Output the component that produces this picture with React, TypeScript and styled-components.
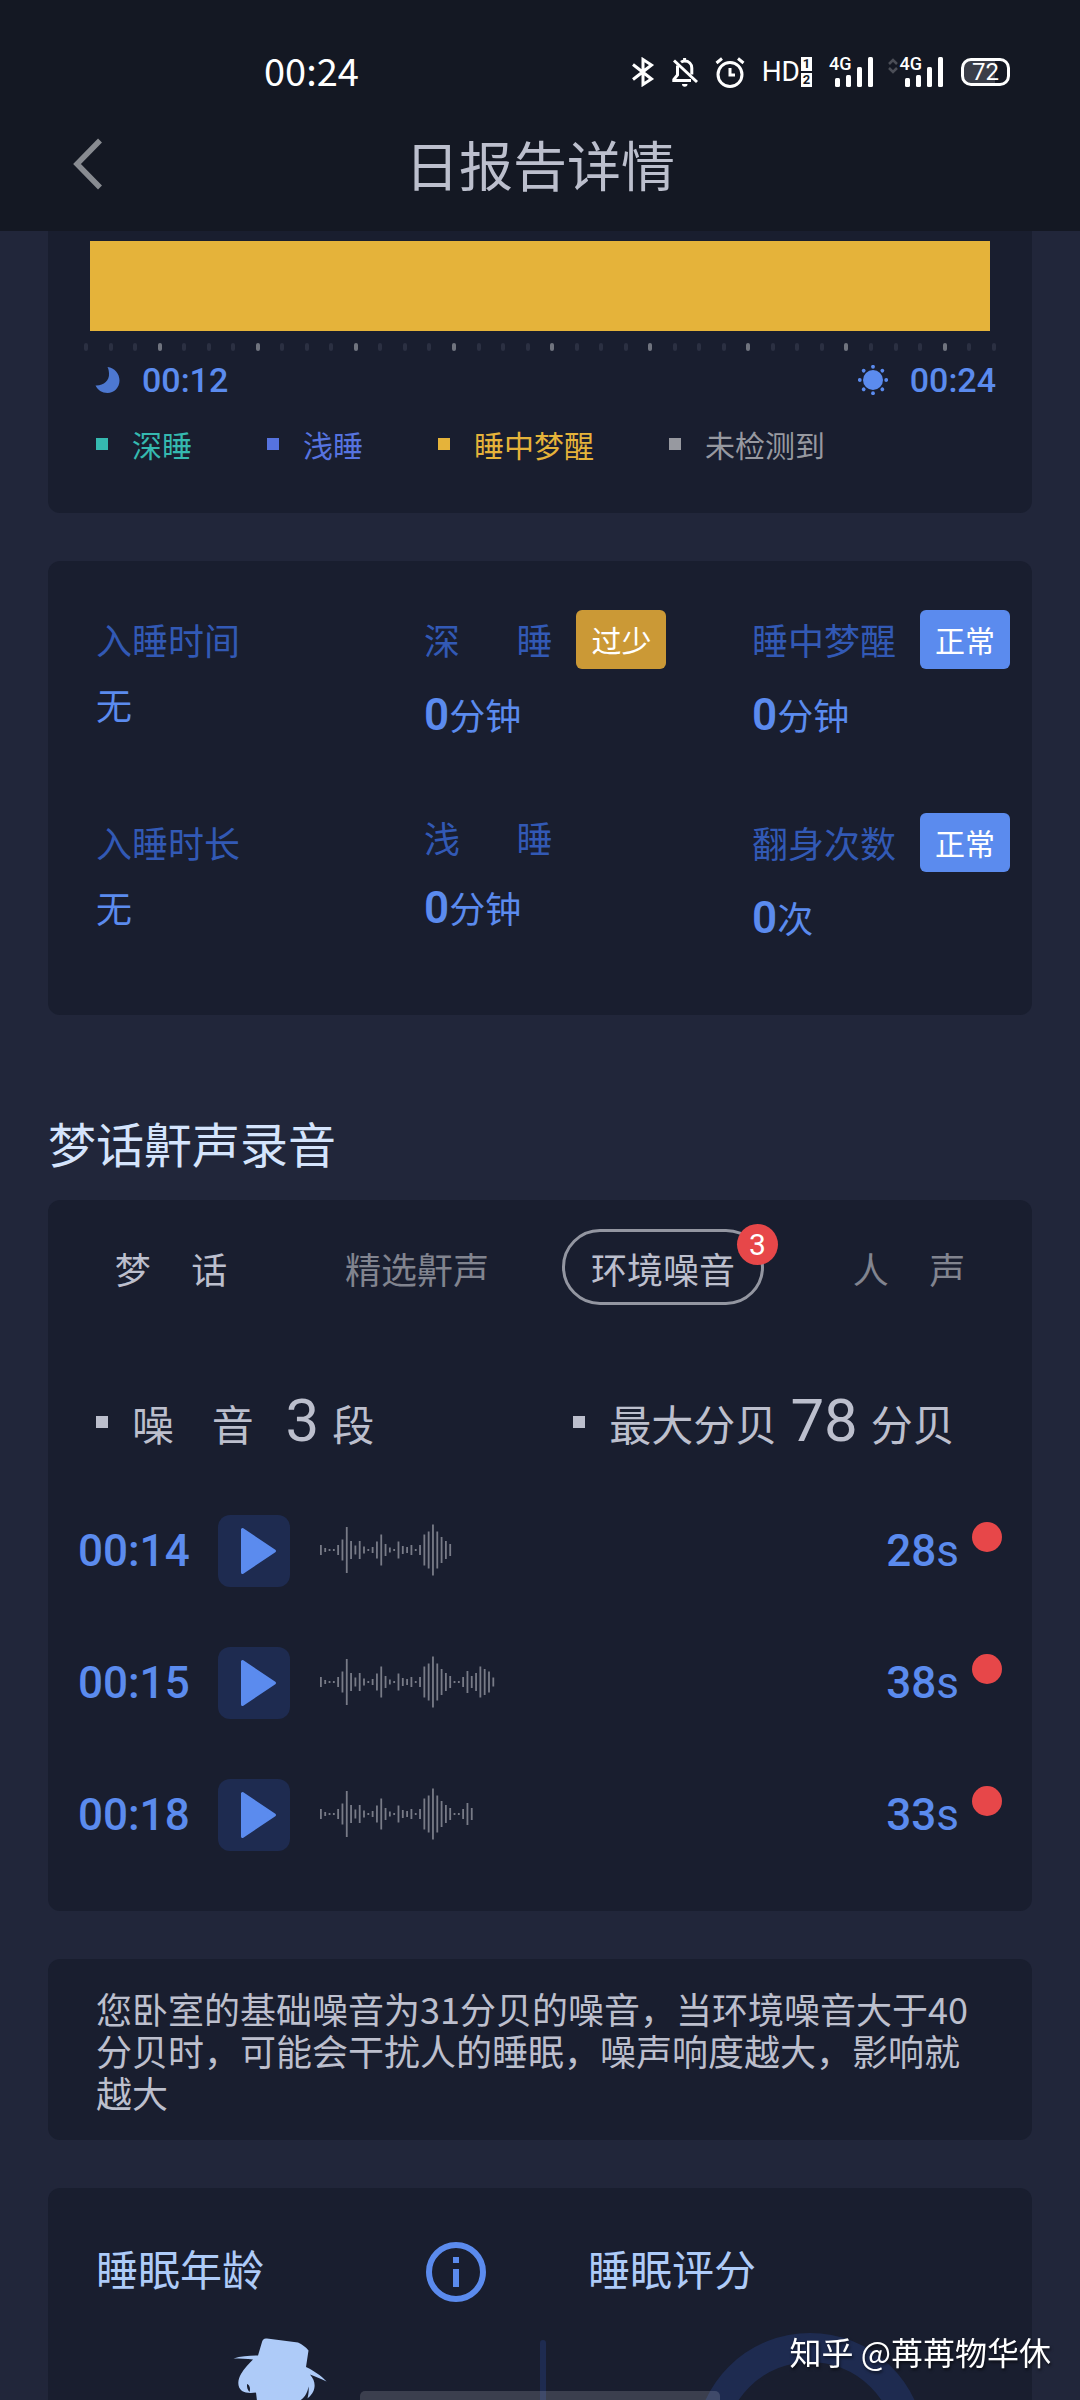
import React from "react";
import styled, { createGlobalStyle } from "styled-components";

const color = {
  header: "#141823",
  page: "#21263a",
  card: "#191e2f",
  blue: "#5b8bee",
  deepBlue: "#3259b5",
  navy: "#1e2b50",
  gold: "#e5b33a",
  amber: "#cb9936",
  teal: "#35b9b0",
  indigo: "#5673df",
  grey: "#9799a0",
  muted: "#81848f",
  soft: "#bcbfcd",
  pale: "#aecbf8",
  title: "#d5e4fc",
  red: "#e74749",
};

const cjk = `"Noto Sans CJK SC", "Noto Sans", sans-serif`;
const digits = `Roboto, "Noto Sans CJK SC", sans-serif`;

const GlobalStyle = createGlobalStyle`
  * { box-sizing: border-box; }
  body {
    margin: 0;
    background: ${color.page};
    font-family: ${cjk};
  }
  button {
    margin: 0;
    padding: 0;
    border: 0;
    background: none;
    color: inherit;
    font: inherit;
    cursor: pointer;
  }
  h1, h2, h3, p, ul, dl, dd { margin: 0; padding: 0; font-weight: 400; }
  ul { list-style: none; }
  svg { display: block; flex: none; }
`;

const Page = styled.div`
  display: flex;
  flex-direction: column;
  height: 100vh;
  overflow: hidden;
  white-space: nowrap;
`;

/* ---------- header ---------- */

const Header = styled.header`
  flex: none;
  background: ${color.header};
`;

const StatusBar = styled.div`
  display: flex;
  align-items: center;
  justify-content: space-between;
  height: 96px;
  padding: 48px 70px 0 264px;
  color: #fff;
`;

const Clock = styled.time`
  padding-bottom: 4px;
  font-size: 38px;
  line-height: 44px;
`;

const StatusIcons = styled.div`
  display: flex;
  align-items: center;
  gap: 17px;
`;

const HdMark = styled.span`
  display: flex;
  align-items: center;
  gap: 1px;
  font: 400 28px/30px ${digits};
`;

const SimStack = styled.span`
  display: grid;
  gap: 2px;
`;

const Sim = styled.span`
  width: 11px;
  background: #fff;
  color: ${color.header};
  font: 700 13px/14px ${digits};
  text-align: center;
`;

const Signals = styled.span`
  display: flex;
  gap: 14px;
`;

const FourG = styled.span`
  font: 500 18px/22px ${digits};
`;

const Signal = styled.span`
  display: flex;
  align-items: flex-start;
  height: 30px;
`;

const Battery = styled.span`
  display: grid;
  place-items: center;
  width: 49px;
  height: 28px;
  border: 3px solid #fff;
  border-radius: 10px;
  background: linear-gradient(90deg, #3b3e48 72%, transparent 72%);
  font: 400 24px/22px ${digits};
`;

const NavBar = styled.nav`
  display: grid;
  grid-template-columns: 1fr auto 1fr;
  align-items: center;
  height: 135px;
  padding: 0 68px;
`;

const BackButton = styled.button`
  justify-self: start;
  padding: 4px;
`;

const PageTitle = styled.h1`
  color: ${color.soft};
  font-size: 54px;
  line-height: 80px;
`;

/* ---------- shared blocks ---------- */

const Content = styled.main`
  display: flex;
  flex: 1;
  flex-direction: column;
  min-height: 0;
  padding: 0 48px;
  overflow: hidden;
`;

const Card = styled.section`
  flex: none;
  border-radius: 12px;
  background: ${color.card};
`;

const Marker = styled.i<{ $tint: string }>`
  flex: none;
  width: 12px;
  height: 12px;
  background: ${(p) => p.$tint};
`;

/* ---------- sleep timeline ---------- */

const TimelineCard = styled(Card)`
  padding: 10px 36px 39px;
  border-radius: 0 0 12px 12px;
`;

const AwakeBar = styled.div`
  height: 90px;
  margin: 0 6px;
  background: ${color.gold};
`;

const Ticks = styled.div`
  display: flex;
  justify-content: space-between;
  margin-top: 12px;
`;

const Tick = styled.i<{ $major: boolean }>`
  width: 4px;
  height: 8px;
  border-radius: 2px;
  background: ${(p) => (p.$major ? "#70747f" : "#2b3042")};
`;

const Range = styled.div`
  display: flex;
  justify-content: space-between;
  margin-top: 9px;
  padding: 0 0 0 11px;
`;

const RangeEnd = styled.span`
  display: flex;
  align-items: center;
  gap: 22px;
  color: ${color.blue};
  font: 500 34px/40px ${digits};
`;

const Legend = styled.ul`
  display: flex;
  gap: 75px;
  margin-top: 14px;
  padding: 0 12px;
`;

const LegendItem = styled.li<{ $tint: string }>`
  display: flex;
  align-items: center;
  gap: 24px;
  color: ${(p) => p.$tint};
  font-size: 30px;
  line-height: 60px;
`;

/* ---------- metrics ---------- */

const Metrics = styled(Card).attrs({ as: "dl" })`
  display: grid;
  grid-template-columns: repeat(3, 1fr);
  margin-top: 48px;
  padding-top: 48px;
`;

const Metric = styled.div`
  height: 203px;
  padding-left: 48px;
`;

const MetricLabel = styled.dt<{ $compact?: boolean }>`
  display: flex;
  align-items: center;
  gap: 24px;
  height: ${(p) => (p.$compact ? 50 : 60)}px;
  color: ${color.deepBlue};
  font-size: 36px;
`;

const Tag = styled.span<{ $tint: string }>`
  width: 90px;
  height: 59px;
  border-radius: 6px;
  background: ${(p) => p.$tint};
  color: #fff;
  font-size: 30px;
  line-height: 58px;
  text-align: center;
`;

const MetricValue = styled.dd<{ $numeric: boolean }>`
  display: flex;
  align-items: baseline;
  margin-top: ${(p) => (p.$numeric ? 21 : 11)}px;
  color: ${color.blue};
  font-size: 36px;
  line-height: 48px;
`;

const MetricNumber = styled.b`
  font: 600 44px/48px ${digits};
`;

/* ---------- recordings ---------- */

const SectionTitle = styled.h2`
  margin: 92px 0 23px;
  color: ${color.title};
  font-size: 48px;
  line-height: 70px;
`;

const RecordingCard = styled(Card)`
  padding-bottom: 60px;
`;

const Tabs = styled.div`
  display: grid;
  grid-template-columns: repeat(4, 1fr);
  justify-items: center;
  padding-top: 29px;
`;

const Tab = styled.button<{ $tint: string; $active?: boolean }>`
  position: relative;
  height: 76px;
  padding: 2px 26px 0;
  border: 3px solid ${(p) => (p.$active ? "#9396a1" : "transparent")};
  border-radius: 38px;
  color: ${(p) => p.$tint};
  font-size: 36px;
  line-height: 68px;
`;

const CountBadge = styled.span`
  position: absolute;
  top: -8px;
  right: -17px;
  width: 41px;
  height: 41px;
  border-radius: 50%;
  background: ${color.red};
  color: #fff;
  font: 400 30px/42px ${digits};
  text-align: center;
`;

const Summary = styled.div`
  display: grid;
  grid-template-columns: 51% 49%;
  margin-top: 75px;
  padding-left: 48px;
`;

const SummaryItem = styled.p`
  display: flex;
  align-items: center;
  gap: 24px;
  height: 84px;
  color: ${color.soft};
  font-size: 42px;
  line-height: 84px;
`;

const SummaryNumber = styled.span`
  margin: 0 13px;
  font: 400 60px/84px ${digits};
`;

const Clips = styled.ul`
  display: grid;
  gap: 60px;
  margin-top: 51px;
  padding: 0 30px;
`;

const Clip = styled.li`
  display: flex;
  align-items: center;
  height: 72px;
  color: ${color.blue};
  font: 500 44px/72px ${digits};
`;

const PlayButton = styled.button`
  display: grid;
  place-items: center;
  width: 72px;
  height: 72px;
  margin: 0 30px 0 28px;
  padding-left: 10px;
  border-radius: 12px;
  background: ${color.navy};
`;

const Duration = styled.span`
  margin-left: auto;
`;

const Unit = styled.span`
  font-weight: 400;
`;

const UnreadDot = styled.i`
  align-self: flex-start;
  width: 30px;
  height: 30px;
  margin: 7px 0 0 13px;
  border-radius: 50%;
  background: ${color.red};
`;

const Note = styled(Card).attrs({ as: "p" })`
  margin-top: 48px;
  padding: 28px 48px 27px;
  color: ${color.soft};
  font-size: 36px;
  line-height: 42px;
  white-space: normal;
`;

/* ---------- scores ---------- */

const ScoreCard = styled(Card)`
  flex: 1 0 0;
  min-height: 0;
  margin-top: 48px;
  padding-top: 54px;
  border-radius: 12px 12px 0 0;
  overflow: hidden;
`;

const ScoreHeads = styled.div`
  display: grid;
  grid-template-columns: 1fr 1fr;
`;

const ScoreHead = styled.div`
  display: flex;
  align-items: center;
  justify-content: space-between;
  height: 60px;
  padding: 0 54px 0 48px;
`;

const ScoreTitle = styled.h3`
  padding-bottom: 8px;
  color: ${color.pale};
  font-size: 42px;
  line-height: 52px;
`;

const ScoreBody = styled.div`
  display: grid;
  grid-template-columns: 50% 6px 1fr;
  margin-top: 31px;
`;

const AgeFigure = styled.div`
  display: flex;
  justify-content: center;
  padding: 5px 28px 0 0;
`;

const Divider = styled.i`
  margin-top: 7px;
  border-radius: 3px 3px 0 0;
  background: ${color.navy};
`;

const ScoreRing = styled.div`
  display: flex;
  justify-content: center;
  padding-left: 42px;
`;

/* ---------- overlays ---------- */

const Watermark = styled.div`
  position: fixed;
  right: 29px;
  bottom: 25px;
  color: #fff;
  font-size: 32px;
  line-height: 48px;
  text-shadow: 1px 2px 3px rgba(0, 0, 0, 0.6);
`;

const HomeIndicator = styled.div`
  position: fixed;
  bottom: 0;
  left: 33.333%;
  width: 33.333%;
  height: 9px;
  border-radius: 5px 5px 0 0;
  background: rgba(255, 255, 255, 0.15);
`;

/* ---------- drawings ---------- */

const BluetoothIcon = () => (
  <svg width="24" height="30" viewBox="0 0 24 30" fill="none" stroke="#fff" strokeWidth="3" strokeLinejoin="miter">
    <path d="M2 7.5 20.5 22 12 27.5V2.5L20.5 8 2 22.5" />
  </svg>
);

const BellOffIcon = () => (
  <svg width="26" height="30" viewBox="0 0 26 30" fill="none" stroke="#fff" strokeWidth="3">
    <path d="M2 3.5 25 25" />
    <path d="M9 5.2C10 4.4 11.3 4 12.6 4c4.300 0 7.200 3 7.200 7v6.500" />
    <path d="M5.500 8.500V18L1.800 22.500v1H19" />
    <path d="M12.600 1v3" />
    <path d="M10 27h5.500a2.700 2.700 0 0 1-5.500 0Z" fill="#fff" stroke="none" />
  </svg>
);

const AlarmIcon = () => (
  <svg width="30" height="31" viewBox="0 0 30 31" fill="none" stroke="#fff" strokeWidth="3">
    <circle cx="15" cy="17.500" r="12" />
    <path d="M15 11v7h5" />
    <path d="M1.500 6 7 1.500M28.500 6 23 1.500" />
  </svg>
);

const ArrowsIcon = () => (
  <svg width="12" height="22" viewBox="0 0 12 22" fill="none" stroke="#4b4e57" strokeWidth="2.500">
    <path d="m1 7 4-4 4 4M1 11l4 4 4-4" />
  </svg>
);

const BarsIcon = () => (
  <svg width="39" height="30" viewBox="0 0 39 30" fill="#fff">
    <rect x="0" y="21" width="5" height="9" rx="1.500" />
    <rect x="11" y="18" width="5" height="12" rx="1.500" />
    <rect x="22" y="10" width="5" height="20" rx="1.500" />
    <rect x="33" y="0" width="5" height="30" rx="1.500" />
  </svg>
);

/* The network name lies over the two short bars. */
const SignalLabel = styled(FourG)`
  margin: -4px -17px 0 0;
`;

const BackIcon = () => (
  <svg width="32" height="52" viewBox="0 0 32 52" fill="none" stroke="#888b91" strokeWidth="5.500">
    <path d="M28 2.500 5 26l23 23.500" />
  </svg>
);

const MoonIcon = () => (
  <svg width="25" height="28" viewBox="0 0 25 28" fill="#4d78d0">
    <path d="M12.500 1C19.500 2 24.500 7.500 24.500 14.500c0 7-5.500 12.500-12 12.500C7 27 2.500 24 .5 19.500c8 .5 14-5 13.500-12C13.900 5 13.500 3 12.500 1Z" />
  </svg>
);

const SunIcon = () => (
  <svg width="30" height="30" viewBox="0 0 30 30" fill={color.blue}>
    <circle cx="15" cy="15" r="10" />
    {[0, 45, 90, 135, 180, 225, 270, 315].map((a) => (
      <circle key={a} cx="15" cy="1.800" r="1.900" transform={`rotate(${a} 15 15)`} />
    ))}
  </svg>
);

const PlayIcon = () => (
  <svg width="37" height="48" viewBox="0 0 37 48" fill={color.blue} stroke={color.blue} strokeWidth="3" strokeLinejoin="round">
    <path d="M2.500 2.500v43l32-21.500Z" />
  </svg>
);

const peaks = [
  10, 4, 2, 2, 10, 21, 46, 18, 9, 18, 7, 2, 6, 17, 31, 12, 5, 2, 17, 8, 6, 10, 2, 10, 31, 37, 51, 37, 26, 18, 12,
  2, 2, 10, 22, 12, 18, 31, 26, 21, 9,
];

const Waveform = ({ bars }: { bars: number }) => (
  <svg width={Math.ceil(bars * 4.31)} height="54" fill="#787b87">
    {peaks.slice(0, bars).map((h, i) => (
      <rect key={i} x={i * 4.31} y={26 - h / 2} width="1.800" height={h} />
    ))}
  </svg>
);

const InfoIcon = () => (
  <svg width="60" height="60" viewBox="0 0 60 60" fill={color.blue}>
    <circle cx="30" cy="30" r="27" fill="none" stroke={color.blue} strokeWidth="6" />
    <rect x="27" y="15" width="6" height="6" />
    <rect x="27" y="27" width="6" height="18" />
  </svg>
);

const HatPerson = () => (
  <svg width="94" height="90" viewBox="0 0 94 90" fill={color.pale}>
    <path d="M34 .5 65 4.500c4 2 8 4.500 10.500 8L73 29c7 3.500 15 8 20.500 14.500C88 41 82 38 77 36.500c3.500 4 5 8 4.500 12.500-.5 5-3.500 8.500-7 11.500 1-4.500 1.500-8 1-12-1 6-3.500 11.500-9.500 14.500V90H24V63l-1-8.500c-5 1-11 .5-14-1.500C4 49 4.500 42 8 36c3-5.500 8-10.500 12-14.500C14 20.500 6 21 .5 20.500 8 18 17 17.500 25 17.500L29 4c.8-2.500 2-4 5-3.500Z" />
    <path d="M14 46c3 1 3.500 5 2.500 8-2-2-2.800-5-2.500-8Z" fill={color.card} />
  </svg>
);

const Ring = () => (
  <svg width="230" height="230" viewBox="0 0 230 230" fill="none" stroke={color.navy} strokeWidth="29">
    <circle cx="115" cy="115" r="100.500" />
  </svg>
);

/* ---------- data ---------- */

const nb = (n: number) => "\u00a0".repeat(n);

const legend = [
  { label: "深睡", tint: color.teal },
  { label: "浅睡", tint: color.indigo },
  { label: "睡中梦醒", tint: color.gold },
  { label: "未检测到", tint: color.grey },
];

type MetricData = { label: string; number?: string; text: string; tag?: string; tint?: string; compact?: boolean };

const metrics: MetricData[] = [
  { label: "入睡时间", text: "无" },
  { label: `深${nb(7)}睡`, number: "0", text: "分钟", tag: "过少", tint: color.amber },
  { label: "睡中梦醒", number: "0", text: "分钟", tag: "正常", tint: color.blue },
  { label: "入睡时长", text: "无" },
  { label: `浅${nb(7)}睡`, number: "0", text: "分钟", compact: true },
  { label: "翻身次数", number: "0", text: "次", tag: "正常", tint: color.blue },
];

const tabs = [
  { label: `梦${nb(5)}话`, tint: color.soft },
  { label: "精选鼾声", tint: color.muted },
  { label: "环境噪音", tint: color.soft, count: 3 },
  { label: `人${nb(5)}声`, tint: color.muted },
];

const clips = [
  { time: "00:14", seconds: 28, bars: 31 },
  { time: "00:15", seconds: 38, bars: 41 },
  { time: "00:18", seconds: 33, bars: 36 },
];

export default function App() {
  return (
    <Page>
      <GlobalStyle />
      <Header>
        <StatusBar>
          <Clock>00:24</Clock>
          <StatusIcons>
            <BluetoothIcon />
            <BellOffIcon />
            <AlarmIcon />
            <HdMark>
              HD
              <SimStack>
                <Sim>1</Sim>
                <Sim>2</Sim>
              </SimStack>
            </HdMark>
            <Signals>
              <Signal>
                <SignalLabel>4G</SignalLabel>
                <BarsIcon />
              </Signal>
              <Signal>
                <ArrowsIcon />
                <SignalLabel>4G</SignalLabel>
                <BarsIcon />
              </Signal>
            </Signals>
            <Battery>72</Battery>
          </StatusIcons>
        </StatusBar>
        <NavBar>
          <BackButton type="button" aria-label="返回">
            <BackIcon />
          </BackButton>
          <PageTitle>日报告详情</PageTitle>
        </NavBar>
      </Header>

      <Content>
        <TimelineCard>
          <AwakeBar />
          <Ticks>
            {Array.from({ length: 38 }, (_, i) => (
              <Tick key={i} $major={i % 4 === 3} />
            ))}
          </Ticks>
          <Range>
            <RangeEnd>
              <MoonIcon />
              00:12
            </RangeEnd>
            <RangeEnd>
              <SunIcon />
              00:24
            </RangeEnd>
          </Range>
          <Legend>
            {legend.map((item) => (
              <LegendItem key={item.label} $tint={item.tint}>
                <Marker $tint={item.tint} />
                {item.label}
              </LegendItem>
            ))}
          </Legend>
        </TimelineCard>

        <Metrics>
          {metrics.map((m) => (
            <Metric key={m.label}>
              <MetricLabel $compact={m.compact}>
                {m.label}
                {m.tag && <Tag $tint={m.tint ?? color.blue}>{m.tag}</Tag>}
              </MetricLabel>
              <MetricValue $numeric={m.number !== undefined}>
                {m.number && <MetricNumber>{m.number}</MetricNumber>}
                {m.text}
              </MetricValue>
            </Metric>
          ))}
        </Metrics>

        <SectionTitle>梦话鼾声录音</SectionTitle>

        <RecordingCard>
          <Tabs role="tablist">
            {tabs.map((t) => (
              <Tab key={t.label} type="button" role="tab" aria-selected={!!t.count} $tint={t.tint} $active={!!t.count}>
                {t.label}
                {t.count && <CountBadge>{t.count}</CountBadge>}
              </Tab>
            ))}
          </Tabs>
          <Summary>
            <SummaryItem>
              <Marker $tint={color.soft} />
              <span>
                噪{nb(4)}音{nb(2)}
                <SummaryNumber>3</SummaryNumber>段
              </span>
            </SummaryItem>
            <SummaryItem>
              <Marker $tint={color.soft} />
              <span>
                最大分贝<SummaryNumber>78</SummaryNumber>分贝
              </span>
            </SummaryItem>
          </Summary>
          <Clips>
            {clips.map((c) => (
              <Clip key={c.time}>
                <time>{c.time}</time>
                <PlayButton type="button" aria-label={`播放 ${c.time}`}>
                  <PlayIcon />
                </PlayButton>
                <Waveform bars={c.bars} />
                <Duration>
                  {c.seconds}
                  <Unit>s</Unit>
                </Duration>
                <UnreadDot />
              </Clip>
            ))}
          </Clips>
        </RecordingCard>

        <Note>
          您卧室的基础噪音为31分贝的噪音，当环境噪音大于40分贝时，可能会干扰人的睡眠，噪声响度越大，影响就越大
        </Note>

        <ScoreCard>
          <ScoreHeads>
            <ScoreHead>
              <ScoreTitle>睡眠年龄</ScoreTitle>
              <button type="button" aria-label="说明">
                <InfoIcon />
              </button>
            </ScoreHead>
            <ScoreHead>
              <ScoreTitle>睡眠评分</ScoreTitle>
            </ScoreHead>
          </ScoreHeads>
          <ScoreBody>
            <AgeFigure>
              <HatPerson />
            </AgeFigure>
            <Divider />
            <ScoreRing>
              <Ring />
            </ScoreRing>
          </ScoreBody>
        </ScoreCard>
      </Content>

      <HomeIndicator />
      <Watermark>知乎 @苒苒物华休</Watermark>
    </Page>
  );
}
